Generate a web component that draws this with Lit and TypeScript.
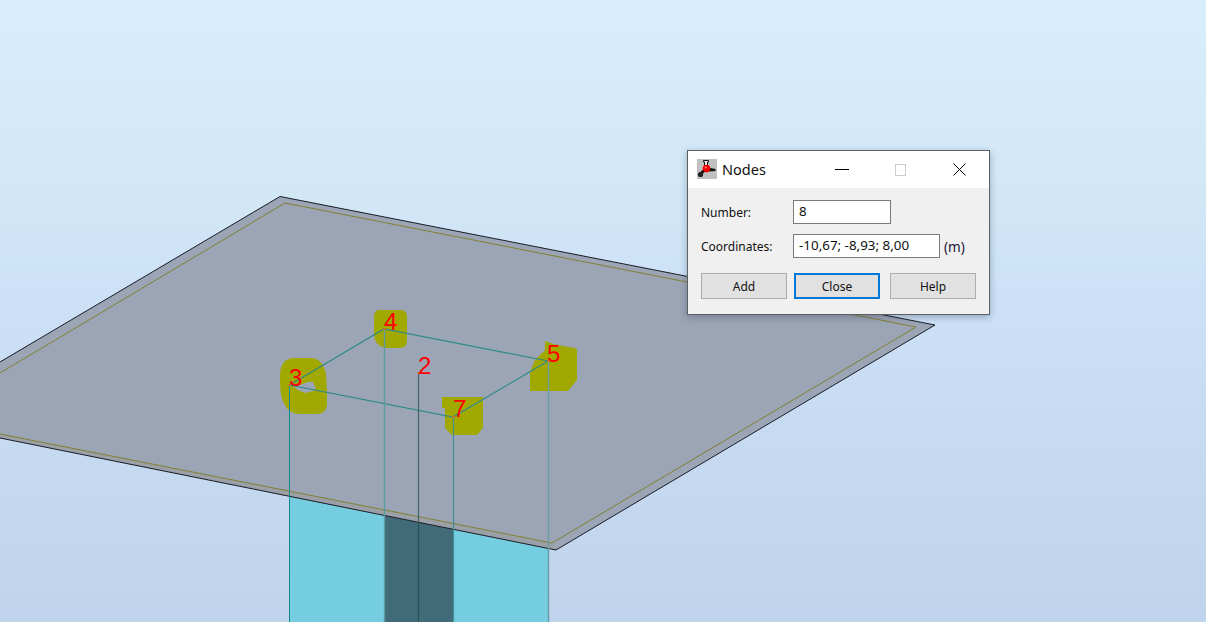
import { LitElement, html, svg, css } from "lit";
import { customElement } from "lit/decorators.js";

const verticals: [number, number, number, string, number][] = [
  [289.5, 385, 622, "#138a90", 1],
  [384.5, 329, 622, "#5c9ba0", 1.4],
  [418.5, 373, 523, "#3f6364", 1.2],
  [418.5, 523, 622, "#1f5550", 1.2],
  [453.5, 417, 622, "#3f8f94", 1.2],
  [548.5, 361, 622, "#6a9ea6", 1.4],
];

const labels: [string, number, number][] = [
  ["3", 289, 386],
  ["4", 384, 330],
  ["2", 418, 374],
  ["5", 547, 362],
  ["7", 453, 417],
];

@customElement("app-root")
export class AppRoot extends LitElement {
  static styles = css`
    :host { display: block; position: relative; width: 1206px; height: 622px; overflow: hidden;
      background: linear-gradient(180deg, #d9eefc 0%, #d1e7f6 33%, #cde2f7 45%, #c6dbf2 70%, #bfd3ec 100%);
      font-family: "Noto Sans", "Open Sans", sans-serif; color: #000; }
    .scene { display: block; width: 1206px; height: 622px; }
    .lbl { font-family: "Liberation Sans", Arial, sans-serif; font-size: 24px; fill: #ff0000; }
    .dialog { position: absolute; left: 687px; top: 150px; width: 303px; height: 165px; box-sizing: border-box;
      border: 1px solid #5c6064; background: #f0f0f0; box-shadow: 0 2px 7px rgba(40,50,70,.35);
      display: flex; flex-direction: column; }
    .title { height: 37px; background: #fff; display: flex; align-items: center; flex: none; padding-left: 9px; }
    .appicon { width: 20px; height: 20px; display: block; flex: none; margin-top: -1px; }
    .title-text { font-size: 14.5px; margin-left: 5px; margin-top: -2px; color: #111; flex: 1; }
    .ctl { width: 59px; height: 37px; display: flex; align-items: center; justify-content: center; flex: none; }
    .ctl svg { display: block; }
    .ctls { display: flex; }
    .body { flex: 1; padding: 12px 13px 0 13px; font-size: 12px; display: flex; flex-direction: column; }
    .row { display: flex; align-items: center; height: 24px; }
    .row + .row { margin-top: 10px; }
    .row label { width: 92px; flex: none; color: #111; }
    .field { box-sizing: border-box; height: 24px; border: 1px solid #7a7a7a; background: #fff; padding: 0 5px;
      line-height: 20px; font-size: 13.4px; color: #111; display: block; white-space: nowrap; }
    .w1 { width: 98px; }
    .w2 { width: 147px; }
    .unit { margin-left: 4px; color: #1a1030; font-size: 13.6px; }
    .buttons { display: flex; margin-top: 15px; }
    .btn { box-sizing: border-box; width: 86px; height: 26px; border: 1px solid #adadad; background: #e1e1e1;
      font: inherit; font-size: 12px; color: #111; padding: 0; display: block; }
    .btn.default { border: 2px solid #0078d7; margin: 0 10px 0 7px; }
  `;

  render() {
    return html`
      <svg class="scene" viewBox="0 0 1206 622">
        <!-- column faces -->
        <polygon points="289.5,494 384,513 384,622 289.5,622" fill="#74cee0"></polygon>
        <polygon points="453,527 548.5,546 548.5,622 453,622" fill="#74cee0"></polygon>
        <polygon points="384,513 453,527 453,622 384,622" fill="#416b78"></polygon>

        <!-- plate -->
        <polygon points="280,196.5 935,325 556,550 0,438 0,362" fill="#9ba5b6"></polygon>
        <polygon points="0,434 552,543.5 556,550 0,438" fill="#9b9fa8"></polygon>
        <polyline points="0,362 280,196.5 935,325 556,550 0,438" fill="none" stroke="#1a1d26" stroke-width="1"></polyline>
        <polyline points="0,373 285,203 916,327 552,543 0,434" fill="none" stroke="#80812f" stroke-width="1"></polyline>

        <!-- blobs -->
        <path d="M379 310H401Q407 310 407 317V340Q407 348 400 348H385Q374 345 374 334V317Q374 310 379 310Z" fill="#a1a800"></path>
        <path fill-rule="evenodd" d="M292 358H311Q321 358 325 370Q327 376 327 405Q326 414 316 414H299Q288 414 284 403Q280 398 280 376Q280 360 292 358ZM293 386L300 385L308 382L313 382L316 388L313 391L305 393L298 390Z" fill="#a1a800"></path>
        <path d="M545 341L555 344.5L575 348L577 350V380L568 391H530V372L535 360L545 350Z" fill="#a1a800"></path>
        <path d="M442 397H483V428L477 435H452L445 428V408H442Z" fill="#a1a800"></path>

        <!-- wire frame -->
        <polygon points="289.5,385 384,329 548,361 453,417" fill="none" stroke="#2f8a88" stroke-width="1.2"></polygon>
        ${verticals.map(
          ([x, y1, y2, c, w]) =>
            svg`<line x1=${x} y1=${y1} x2=${x} y2=${y2} stroke=${c} stroke-width=${w}></line>`
        )}
        ${[[289.5, 385], [384.5, 329], [548.5, 361], [453.5, 417], [418.5, 373]].map(
          ([x, y]) => svg`<rect x=${x - 1} y=${y - 1} width="2" height="2" fill="#e8641a"></rect>`
        )}
        ${labels.map(([t, x, y]) => svg`<text class="lbl" x=${x} y=${y}>${t}</text>`)}
      </svg>

      <div class="dialog">
        <div class="title">
          <svg class="appicon" viewBox="0 0 20 20">
            <rect width="20" height="20" fill="#c0c0c0"></rect>
            <path d="M6.5 1.5H11.5V3H10.5V7.5H7.5V3H6.5Z" fill="#ececec" stroke="#111" stroke-width="1"></path>
            <path d="M11 8.5L18.5 10V12L11 12.5Z" fill="#111"></path>
            <path d="M7.5 11L3.5 15" stroke="#111" stroke-width="3"></path>
            <circle cx="3.5" cy="15.5" r="2.6" fill="#222"></circle>
            <circle cx="9.5" cy="9.5" r="3.8" fill="#f20000"></circle>
            <circle cx="8.7" cy="8.5" r="1" fill="#ff8080"></circle>
          </svg>
          <span class="title-text">Nodes</span>
          <div class="ctls">
            <div class="ctl"><svg width="14" height="2"><rect width="14" height="1" y="0" fill="#000"></rect></svg></div>
            <div class="ctl"><svg width="11" height="12"><rect x=".5" y=".5" width="10" height="11" fill="none" stroke="#ccc"></rect></svg></div>
            <div class="ctl"><svg width="13" height="13" viewBox="0 0 13 13"><path d="M.5 .5L12.5 12.5M12.5 .5L.5 12.5" stroke="#000" fill="none"></path></svg></div>
          </div>
        </div>
        <div class="body">
          <div class="row"><label>Number:</label><span class="field w1">8</span></div>
          <div class="row"><label>Coordinates:</label><span class="field w2">-10,67; -8,93; 8,00</span><span class="unit">(m)</span></div>
          <div class="buttons">
            <button class="btn">Add</button>
            <button class="btn default">Close</button>
            <button class="btn">Help</button>
          </div>
        </div>
      </div>
    `;
  }
}
